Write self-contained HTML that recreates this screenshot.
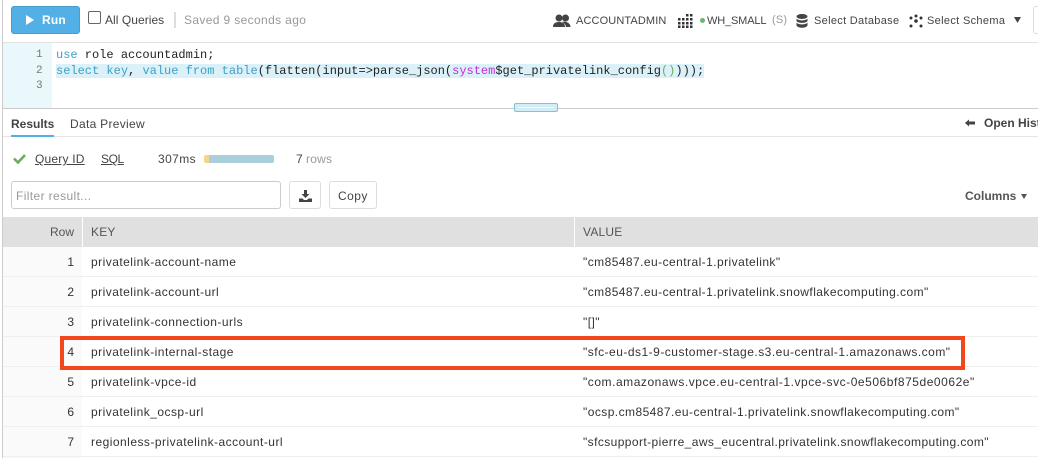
<!DOCTYPE html>
<html><head><meta charset="utf-8">
<style>
html,body{margin:0;padding:0;background:#fff;width:1038px;height:458px;overflow:hidden}
body{position:relative;font-family:"Liberation Sans",sans-serif;font-size:12px;color:#333}
.a{position:absolute;white-space:nowrap}
.t{position:absolute;white-space:nowrap;line-height:16px;height:16px}
.m{font-family:"Liberation Mono",monospace;font-size:12px;color:#222}
.k{color:#3f9fc4}
svg{position:absolute}
.c{font-size:12px;color:#333}
.key{left:91px;letter-spacing:.47px}
.val{left:583px;letter-spacing:.44px}
.n{left:40px;width:34px;text-align:right}
</style></head><body>
<div class="a" style="left:2px;top:0;width:1px;height:458px;background:#ccc"></div>
<div class="a" style="left:3px;top:42px;width:1035px;height:1px;background:#e2e2e2"></div>

<!-- toolbar -->
<div class="a" style="left:11px;top:6px;width:69px;height:28px;background:#53b0e6;border:1px solid #4a9ccb;box-sizing:border-box;border-radius:3px"></div>
<svg style="left:26px;top:15px" width="9" height="10"><path d="M0 0L8 5L0 10Z" fill="#fff"/></svg>
<div class="t" style="left:42px;top:12px;color:#fff;font-weight:bold;font-size:12px;letter-spacing:.2px">Run</div>
<div class="a" style="left:88px;top:11px;width:13px;height:13px;border:1px solid #666;box-sizing:border-box;border-radius:2px;background:#fff"></div>
<div class="t" style="left:105px;top:12px;color:#444;font-size:12px;letter-spacing:.05px">All Queries</div>
<div class="a" style="left:174px;top:12px;width:2px;height:16px;background:#ddd"></div>
<div class="t" style="left:184px;top:12px;color:#999;font-size:12px;letter-spacing:.36px">Saved 9 seconds ago</div>

<svg style="left:553px;top:14px" width="18" height="14" viewBox="0 0 18 14" fill="#444"><circle cx="6" cy="4" r="3.500"/><circle cx="12.500" cy="4" r="3.500"/><path d="M0 13C0 9 3 8 6 8S12 9 12 13ZM9 8C11 7 17.500 8 17.500 13H13C13 11 11 9 9 8Z"/></svg>
<div class="t" style="left:576px;top:13px;font-size:11px;color:#444;letter-spacing:.12px">ACCOUNTADMIN</div>
<svg style="left:678px;top:14px" width="15" height="14" fill="#333"><rect x="0" y="4" width="2.500" height="2.500"/><rect x="4" y="4" width="2.500" height="2.500"/><rect x="8" y="0" width="2.500" height="2.500"/><rect x="12" y="0" width="2.500" height="2.500"/><rect x="8" y="4" width="2.500" height="2.500"/><rect x="12" y="4" width="2.500" height="2.500"/><rect x="0" y="8" width="2.500" height="2.500"/><rect x="4" y="8" width="2.500" height="2.500"/><rect x="8" y="8" width="2.500" height="2.500"/><rect x="12" y="8" width="2.500" height="2.500"/><rect x="0" y="11.500" width="2.500" height="2.500"/><rect x="4" y="11.500" width="2.500" height="2.500"/><rect x="8" y="11.500" width="2.500" height="2.500"/><rect x="12" y="11.500" width="2.500" height="2.500"/></svg>
<div class="a" style="left:700px;top:18px;width:5px;height:5px;border-radius:50%;background:#6cb56c"></div>
<div class="t" style="left:707px;top:13px;font-size:11px;color:#444;letter-spacing:-.15px">WH_SMALL</div>
<div class="t" style="left:772px;top:12px;font-size:11px;color:#999;letter-spacing:.2px">(S)</div>
<svg style="left:796px;top:14px" width="12" height="14" fill="#444"><ellipse cx="6" cy="2.500" rx="5.500" ry="2.500"/><path d="M.5 4.500C2 7 10 7 11.500 4.500V7C10 9.500 2 9.500 .5 7ZM.5 8.500C2 11 10 11 11.500 8.500V11.500C10 14.500 2 14.500 .5 11.500Z"/></svg>
<div class="t" style="left:814px;top:13px;font-size:11px;color:#444;letter-spacing:.31px">Select Database</div>
<svg style="left:909px;top:14px" width="14" height="14" fill="#333"><circle cx="2" cy="4" r="1.500"/><circle cx="7" cy="2" r="1.500"/><circle cx="12" cy="4" r="1.500"/><circle cx="7" cy="7" r="1.800"/><circle cx="2" cy="12" r="1.500"/><circle cx="12" cy="12" r="1.500"/></svg>
<div class="t" style="left:927px;top:13px;font-size:11px;color:#444;letter-spacing:.33px">Select Schema</div>
<svg style="left:1014px;top:17px" width="7" height="6"><path d="M0 0H7L3.500 6Z" fill="#444"/></svg>
<div class="a" style="left:1033px;top:6px;width:10px;height:28px;border:1px solid #ddd;box-sizing:border-box;border-radius:3px"></div>

<!-- editor -->
<div class="a" style="left:3px;top:43px;width:49px;height:65px;background:#eaf8fb"></div>
<div class="a" style="left:56px;top:64px;width:648px;height:14px;background:#daf1f9"></div>
<div class="t m" style="left:36px;top:47px;color:#777;font-size:11px">1</div>
<div class="t m" style="left:36px;top:63px;color:#777;font-size:11px">2</div>
<div class="t m" style="left:36px;top:78px;color:#777;font-size:11px">3</div>
<div class="t m" style="left:56px;top:47px"><span class="k">use</span> role accountadmin;</div>
<div class="t m" style="left:56px;top:63px"><span class="k">select</span> <span class="k">key</span>, <span class="k">value</span> <span class="k">from</span> <span class="k">table</span>(flatten(input=&gt;parse_json(<span style="color:#c62cd8">system</span>$get_privatelink_config<span style="color:#6fae58">()</span>)));</div>
<div class="a" style="left:3px;top:108px;width:1035px;height:1px;background:#ccc"></div>
<div class="a" style="left:514px;top:103px;width:44px;height:9px;background:#d3edf6;border:1px solid #7cc5e0;box-sizing:border-box;border-radius:2px"></div>
<div class="a" style="left:518px;top:107px;width:36px;height:1px;background:#fff"></div>

<!-- tabs -->
<div class="t" style="left:11px;top:116px;font-weight:bold;color:#444;font-size:12px">Results</div>
<div class="t" style="left:70px;top:116px;color:#444;font-size:12px;letter-spacing:.3px">Data Preview</div>
<div class="a" style="left:3px;top:136px;width:1035px;height:1px;background:#e5e5e5"></div>
<div class="a" style="left:11px;top:135px;width:43px;height:2px;background:#53b0e6"></div>
<svg style="left:965px;top:119px" width="11" height="8"><path d="M0 4L4 .5V2.500H10V5.500H4V7.500Z" fill="#444"/></svg>
<div class="t" style="left:984px;top:115px;font-weight:bold;font-size:12px;color:#444">Open Hist</div>

<!-- status -->
<svg style="left:13px;top:153px" width="13" height="11"><path d="M1 5.500L5 9.500L12 2" fill="none" stroke="#6aae5c" stroke-width="2.600"/></svg>
<div class="t" style="left:35px;top:151px;color:#444;text-decoration:underline;letter-spacing:.2px">Query ID</div>
<div class="t" style="left:101px;top:151px;color:#444;text-decoration:underline;letter-spacing:-.4px">SQL</div>
<div class="t" style="left:158px;top:151px;color:#444;letter-spacing:.4px">307ms</div>
<div class="a" style="left:204px;top:155px;width:5px;height:8px;background:#f5d58c;border-radius:2px 0 0 2px"></div>
<div class="a" style="left:209px;top:155px;width:65px;height:8px;background:#a9cfdc;border-radius:0 2px 2px 0"></div>
<div class="t" style="left:296px;top:151px;color:#444">7 <span style="color:#999;letter-spacing:.2px">rows</span></div>

<!-- filter -->
<div class="a" style="left:11px;top:181px;width:270px;height:28px;border:1px solid #ccc;box-sizing:border-box;border-radius:3px"></div>
<div class="t" style="left:16px;top:188px;color:#999;letter-spacing:.38px">Filter result...</div>
<div class="a" style="left:289px;top:181px;width:32px;height:28px;border:1px solid #ddd;box-sizing:border-box;border-radius:3px"></div>
<svg style="left:299px;top:190px" width="13" height="12" fill="#444"><path d="M5 0H8V4H10.500L6.500 8L2.500 4H5Z"/><path d="M0 8.500H3.500L5 10H8L9.500 8.500H13V12H0Z"/></svg>
<div class="a" style="left:329px;top:181px;width:48px;height:28px;border:1px solid #ddd;box-sizing:border-box;border-radius:3px"></div>
<div class="t" style="left:338px;top:188px;color:#444;letter-spacing:.45px">Copy</div>
<div class="t" style="left:965px;top:188px;font-weight:bold;color:#555;font-size:12px">Columns</div>
<svg style="left:1021px;top:194px" width="6" height="5"><path d="M0 0H6L3 5Z" fill="#555"/></svg>

<!-- table -->
<div class="a" style="left:3px;top:217px;width:1035px;height:30px;background:#e0e0e0"></div>
<div class="a" style="left:3px;top:247px;width:79px;height:211px;background:#fafafa"></div>
<div class="a" style="left:82px;top:217px;width:1px;height:30px;background:#fff"></div>
<div class="a" style="left:574px;top:217px;width:1px;height:30px;background:#fff"></div>
<div class="t" style="left:40px;width:34px;text-align:right;top:224px;color:#555">Row</div>
<div class="t" style="left:91px;top:224px;color:#555;letter-spacing:.2px">KEY</div>
<div class="t" style="left:583px;top:224px;color:#555;letter-spacing:.2px">VALUE</div>

<div class="a" style="left:3px;top:276px;width:1035px;height:1px;background:#efefef"></div>
<div class="a" style="left:3px;top:306px;width:1035px;height:1px;background:#efefef"></div>
<div class="a" style="left:3px;top:336px;width:1035px;height:1px;background:#efefef"></div>
<div class="a" style="left:3px;top:366px;width:1035px;height:1px;background:#efefef"></div>
<div class="a" style="left:3px;top:396px;width:1035px;height:1px;background:#efefef"></div>
<div class="a" style="left:3px;top:426px;width:1035px;height:1px;background:#efefef"></div>
<div class="a" style="left:3px;top:456px;width:1035px;height:1px;background:#efefef"></div>

<div class="t c n" style="top:254px">1</div><div class="t c key" style="top:254px">privatelink-account-name</div><div class="t c val" style="top:254px">"cm85487.eu-central-1.privatelink"</div>
<div class="t c n" style="top:284px">2</div><div class="t c key" style="top:284px">privatelink-account-url</div><div class="t c val" style="top:284px">"cm85487.eu-central-1.privatelink.snowflakecomputing.com"</div>
<div class="t c n" style="top:314px">3</div><div class="t c key" style="top:314px">privatelink-connection-urls</div><div class="t c val" style="top:314px">"[]"</div>
<div class="t c n" style="top:344px">4</div><div class="t c key" style="top:344px">privatelink-internal-stage</div><div class="t c val" style="top:344px;letter-spacing:.49px">"sfc-eu-ds1-9-customer-stage.s3.eu-central-1.amazonaws.com"</div>
<div class="t c n" style="top:374px">5</div><div class="t c key" style="top:374px">privatelink-vpce-id</div><div class="t c val" style="top:374px;letter-spacing:.54px">"com.amazonaws.vpce.eu-central-1.vpce-svc-0e506bf875de0062e"</div>
<div class="t c n" style="top:404px">6</div><div class="t c key" style="top:404px">privatelink_ocsp-url</div><div class="t c val" style="top:404px">"ocsp.cm85487.eu-central-1.privatelink.snowflakecomputing.com"</div>
<div class="t c n" style="top:434px">7</div><div class="t c key" style="top:434px">regionless-privatelink-account-url</div><div class="t c val" style="top:434px;letter-spacing:.41px">"sfcsupport-pierre_aws_eucentral.privatelink.snowflakecomputing.com"</div>

<!-- highlight -->
<div class="a" style="left:60px;top:336px;width:905px;height:34px;border:4px solid #f0471c;box-sizing:border-box"></div>
</body></html>
